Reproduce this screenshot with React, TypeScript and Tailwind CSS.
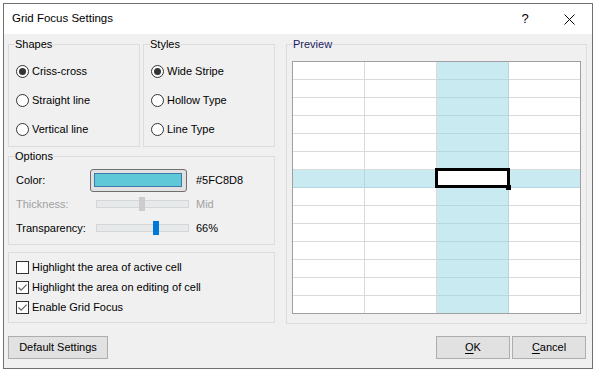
import React from "react";

const ROWS = 14;
const COLS = 4;
const ACTIVE_ROW = 6;
const ACTIVE_COL = 2;

const Radio = ({ checked, label }: { checked?: boolean; label: string }) => (
  <div className="flex items-center h-[29px]">
    <span className="ml-[7px] w-[13px] h-[13px] rounded-full border border-[#333333] bg-white flex items-center justify-center">
      {checked && <span className="w-[7px] h-[7px] rounded-full bg-[#333333]" />}
    </span>
    <span className="ml-[3px]">{label}</span>
  </div>
);

const Check = ({ checked, label }: { checked?: boolean; label: string }) => (
  <div className="flex items-center h-[20px]">
    <span className="ml-[7px] w-[13px] h-[13px] border border-[#333333] bg-white flex items-center justify-center">
      {checked && (
        <svg width="11" height="11" viewBox="0 0 11 11">
          <path d="M1.5 5.5 L4.2 8.2 L9.6 2.6" fill="none" stroke="#666666" strokeWidth="1.2" />
        </svg>
      )}
    </span>
    <span className="ml-[3px]">{label}</span>
  </div>
);

const Slider = ({ value, disabled }: { value: number; disabled?: boolean }) => (
  <div className="relative w-[93px] h-[14px] flex items-center">
    <div className="w-full h-[8px] bg-[#e7eaea] border border-[#d6d6d6]" />
    <div
      className={`absolute top-0 w-[6px] h-[14px] ${disabled ? "bg-[#cccccc]" : "bg-[#0078d7]"}`}
      style={{ left: Math.floor(value * 87) }}
    />
  </div>
);

const Button = ({ children, className = "" }: { children: React.ReactNode; className?: string }) => (
  <div
    className={`h-[23px] border border-[#adadad] bg-[#e1e1e1] flex items-center justify-center ${className}`}
  >
    {children}
  </div>
);

const PreviewGrid = () => (
  <div className="grid grid-cols-[72px_72px_72px_71px] border border-[#a0a0a0] bg-white w-[289px]">
    {Array.from({ length: ROWS * COLS }, (_, i) => {
      const r = Math.floor(i / COLS);
      const c = i % COLS;
      const active = r === ACTIVE_ROW && c === ACTIVE_COL;
      const lit = !active && (r === ACTIVE_ROW || c === ACTIVE_COL);
      return (
        <div
          key={i}
          className={`relative ${active ? "z-10" : ""} ${r < ROWS - 1 ? "h-[18px] border-b" : "h-[17px]"} ${
            c < COLS - 1 ? "border-r" : ""
          } ${lit ? "bg-[#c8eaf0] border-[#b6d7de]" : "bg-white border-[#dadada]"}`}
        >
          {active && (
            <>
              <div className="absolute -left-[2px] -right-[2px] -top-[2px] -bottom-[1px] border-[3px] border-black" />
              <div className="absolute -right-[3px] -bottom-[3px] w-[5px] h-[5px] bg-black" />
            </>
          )}
        </div>
      );
    })}
  </div>
);

export default function App() {
  return (
    <div className="w-[596px] h-[372px] bg-white p-[3px] font-['Liberation_Sans',Arial,sans-serif] text-[11px] text-black">
      <div className="w-[590px] h-[366px] border border-[#707070] flex flex-col">
        {/* title bar */}
        <div className="h-[30px] bg-white flex items-center">
          <span className="ml-[8px] text-[11.5px]">Grid Focus Settings</span>
          <span className="ml-auto w-[42px] text-center text-[13px]">?</span>
          <span className="w-[46px] flex justify-center">
            <svg width="11" height="11" viewBox="0 0 11 11">
              <path d="M0.5 0.5 L10.5 10.5 M10.5 0.5 L0.5 10.5" stroke="#000" strokeWidth="1" />
            </svg>
          </span>
        </div>

        {/* client */}
        <div className="flex-1 bg-[#f0f0f0] flex flex-col">
          <div className="flex pt-[2px] pl-[4px] gap-[11px]">
            <div className="w-[267px] flex flex-col">
              <div className="flex gap-[3px]">
                <fieldset className="w-[132px] h-[111px] border border-[#dcdcdc]">
                  <legend className="ml-[6px] leading-[16px] h-[16px]">Shapes</legend>
                  <div className="pt-[5px]">
                    <Radio checked label="Criss-cross" />
                    <Radio label="Straight line" />
                    <Radio label="Vertical line" />
                  </div>
                </fieldset>
                <fieldset className="w-[132px] h-[111px] border border-[#dcdcdc]">
                  <legend className="ml-[6px] leading-[16px] h-[16px]">Styles</legend>
                  <div className="pt-[5px]">
                    <Radio checked label="Wide Stripe" />
                    <Radio label="Hollow Type" />
                    <Radio label="Line Type" />
                  </div>
                </fieldset>
              </div>

              <fieldset className="mt-[1px] w-[267px] h-[97px] border border-[#dcdcdc]">
                <legend className="ml-[6px] leading-[16px] h-[16px]">Options</legend>
                <div className="pt-[5px] pl-[7px]">
                  <div className="flex items-center h-[23px]">
                    <span className="w-[74px]">Color:</span>
                    <div className="w-[97px] h-[23px] rounded-[3px] border border-[#707070] bg-[#e1e1e1] pt-[3px] pl-[3px] pr-[4px] pb-[4px]">
                      <div className="w-full h-full border border-[#3d7bad] bg-[#5fc8d8]" />
                    </div>
                    <span className="ml-[9px]">#5FC8D8</span>
                  </div>
                  <div className="flex items-center h-[24px] text-[#a0a0a0]">
                    <span className="w-[80px]">Thickness:</span>
                    <Slider value={0.5} disabled />
                    <span className="ml-[7px]">Mid</span>
                  </div>
                  <div className="flex items-center h-[24px]">
                    <span className="w-[80px]">Transparency:</span>
                    <Slider value={0.66} />
                    <span className="ml-[7px]">66%</span>
                  </div>
                </div>
              </fieldset>

              <div className="mt-[7px] w-[267px] h-[71px] border border-[#dcdcdc] pt-[4px]">
                <Check label="Highlight the area of active cell" />
                <Check checked label="Highlight the area on editing of cell" />
                <Check checked label="Enable Grid Focus" />
              </div>
            </div>

            <fieldset className="w-[301px] h-[288px] border border-[#dcdcdc]">
              <legend className="ml-[6px] leading-[16px] h-[16px] text-[#1a1a5e]">Preview</legend>
              <div className="pt-[9px] pl-[5px]">
                <PreviewGrid />
              </div>
            </fieldset>
          </div>

          <div className="mt-[12px] flex pl-[4px] pr-[6px]">
            <Button className="w-[100px]">Default Settings</Button>
            <div className="ml-auto flex gap-[2px]">
              <Button className="w-[74px]">
                <span className="underline underline-offset-2">O</span>K
              </Button>
              <Button className="w-[74px]">
                <span className="underline underline-offset-2">C</span>ancel
              </Button>
            </div>
          </div>
        </div>
      </div>
    </div>
  );
}
